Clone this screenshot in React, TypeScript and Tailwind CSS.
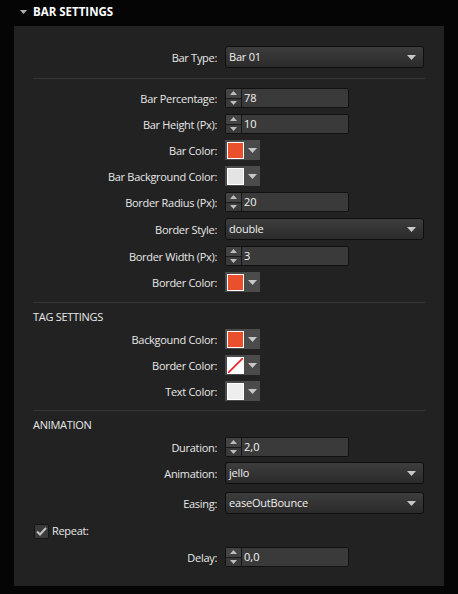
import React from "react"

const Arrow = ({ className = "" }: { className?: string }) => (
  <svg width="9" height="5" viewBox="0 0 9 5" className={className}>
    <path d="M0 0 H9 L4.5 5 Z" fill="#c8c8c8" />
  </svg>
)

function Label({ children }: { children: React.ReactNode }) {
  return <div className="text-right text-[11px] leading-none tracking-[-0.3px] text-[#e8e8e8]">{children}</div>
}

function Row({ label, children, h = "h-[20px]" }: { label: string; children: React.ReactNode; h?: string }) {
  return (
    <div className={`grid grid-cols-[184px_1fr] gap-x-2 items-center ${h}`}>
      <Label>{label}</Label>
      <div className="flex items-center h-full">{children}</div>
    </div>
  )
}

function Select({ value }: { value: string }) {
  return (
    <div className="w-[199px] h-[22px] flex items-center justify-between border border-[#0e0e0e] rounded-[3px] bg-gradient-to-b from-[#3d3d3d] to-[#2b2b2b] pl-[3px] pr-[7px]">
      <span className="text-[11px] tracking-[-0.2px] text-[#f0f0f0]">{value}</span>
      <Arrow />
    </div>
  )
}

function Spinner({ value }: { value: string }) {
  return (
    <div className="w-[124px] h-[20px] flex border border-[#111] rounded-[2px] bg-[#3a3a3a]">
      <div className="w-[16px] flex flex-col border-r border-[#151515]">
        <div className="flex-1 flex items-center justify-center bg-[#434343] border-b border-[#1a1a1a]">
          <svg width="7" height="4" viewBox="0 0 7 4"><path d="M0 4 H7 L3.5 0 Z" fill="#bdbdbd" /></svg>
        </div>
        <div className="flex-1 flex items-center justify-center bg-[#3a3a3a]">
          <svg width="7" height="4" viewBox="0 0 7 4"><path d="M0 0 H7 L3.5 4 Z" fill="#bdbdbd" /></svg>
        </div>
      </div>
      <div className="flex-1 flex items-center pl-[2px] text-[11px] text-[#f4f4f4]">{value}</div>
    </div>
  )
}

function ColorPick({ color, none = false }: { color: string; none?: boolean }) {
  return (
    <div className="w-[35px] h-[20px] flex items-center bg-[#4b4b4b] pl-[2px]">
      <div className="relative w-[17px] h-[17px] border border-white overflow-hidden" style={{ background: color }}>
        {none && (
          <svg className="absolute inset-0" width="15" height="15" viewBox="0 0 15 15">
            <path d="M0 15 L15 0" stroke="#e8202a" strokeWidth="1.6" />
          </svg>
        )}
      </div>
      <div className="flex-1 flex justify-center">
        <Arrow />
      </div>
    </div>
  )
}

function Sep({ className = "" }: { className?: string }) {
  return <div className={`h-px bg-[#363636] ${className}`} />
}

export default function App() {
  return (
    <div className="min-h-screen w-[458px] bg-[#050505] font-['Open_Sans',sans-serif]">
      <div className="h-[26px] flex items-start pt-[5px] pl-[20px]">
        <svg width="7" height="4" viewBox="0 0 7 4" className="mt-[5px]"><path d="M0 0 H7 L3.5 4 Z" fill="#b0b0b0" /></svg>
        <span className="ml-[6px] text-[11.5px] font-bold text-white leading-[14px]">BAR SETTINGS</span>
      </div>

      <div className="ml-[14px] w-[430px] bg-[#222222] px-[19px] pt-[20px] pb-[19px]">
        <Row label="Bar Type:" h="h-[22px]">
          <Select value="Bar 01" />
        </Row>
        <Sep className="mt-[10px] mb-[9px]" />

        <div className="flex flex-col gap-[6px]">
          <Row label="Bar Percentage:"><Spinner value="78" /></Row>
          <Row label="Bar Height (Px):"><Spinner value="10" /></Row>
          <Row label="Bar Color:"><ColorPick color="#e9502b" /></Row>
          <Row label="Bar Background Color:"><ColorPick color="#e4e4e4" /></Row>
          <Row label="Border Radius (Px):"><Spinner value="20" /></Row>
          <Row label="Border Style:" h="h-[22px]"><Select value="double" /></Row>
          <Row label="Border Width (Px):"><Spinner value="3" /></Row>
          <Row label="Border Color:"><ColorPick color="#e9502b" /></Row>
        </div>

        <Sep className="mt-[10px]" />
        <div className="mt-[7px] h-[14px] text-[11px] leading-[14px] tracking-[-0.3px] text-[#e8e8e8]">TAG SETTINGS</div>
        <div className="mt-[5px] flex flex-col gap-[6px]">
          <Row label="Backgound Color:"><ColorPick color="#e9502b" /></Row>
          <Row label="Border Color:"><ColorPick color="#ffffff" none /></Row>
          <Row label="Text Color:"><ColorPick color="#eeeeee" /></Row>
        </div>

        <Sep className="mt-[9px]" />
        <div className="mt-[7px] h-[14px] text-[11px] leading-[14px] tracking-[-0.3px] text-[#e8e8e8]">ANIMATION</div>
        <div className="mt-[5px]">
          <Row label="Duration:"><Spinner value="2,0" /></Row>
        </div>
        <div className="mt-[5px]">
          <Row label="Animation:" h="h-[22px]"><Select value="jello" /></Row>
        </div>
        <div className="mt-[8px]">
          <Row label="Easing:" h="h-[22px]"><Select value="easeOutBounce" /></Row>
        </div>
        <div className="mt-[10px] h-[15px] flex items-center pl-px">
          <div className="w-[15px] h-[15px] flex items-center justify-center bg-[#3a3a3a] border border-[#161616] rounded-[2px]">
            <svg width="11" height="9" viewBox="0 0 11 9"><path d="M1 4.5 L4 7.5 L10 1" stroke="#c4c4c4" strokeWidth="2" fill="none" /></svg>
          </div>
          <span className="ml-[3px] text-[11px] tracking-[-0.3px] text-[#e8e8e8]">Repeat:</span>
        </div>
        <div className="mt-[8px]">
          <Row label="Delay:"><Spinner value="0,0" /></Row>
        </div>
      </div>
    </div>
  )
}
